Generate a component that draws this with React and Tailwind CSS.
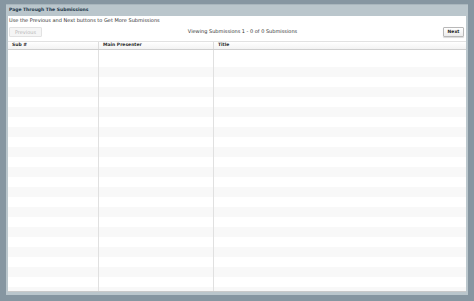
export default function App() {
  const rows = Array.from({ length: 24 });
  return (
    <div className="w-[474px] h-[301px] bg-[#8696a1] pl-[6px] pt-[4px] pr-[6px] pb-[6px] font-['DejaVu_Sans',sans-serif]">
      <div className="h-full flex flex-col bg-[#bac6cc] border-t border-t-[#a9b6bd] px-[2px] pb-[3px]">
        <div className="h-[11px] flex items-center pl-[1px] text-[4.5px] font-bold text-[#22364a] leading-none">
          Page Through The Submissions
        </div>
        <div className="flex-1 bg-white flex flex-col min-h-0 overflow-hidden">
          <div className="h-[8px] pt-[1px] pl-[1px] text-[5px] leading-[7px] text-[#333]">
            Use the Previous and Next buttons to Get More Submissions
          </div>
          <div className="mt-[3px] flex items-center pl-[1px] pr-[2px]">
            <div className="w-[33px] h-[10px] flex items-center justify-center text-[5px] text-[#b5b5b5] bg-[#f5f5f5] border border-[#e2e2e2] rounded-[1px] leading-none">
              Previous
            </div>
            <div className="flex-1 text-center text-[5px] text-[#333] leading-none -mt-[1px]">
              Viewing Submissions 1 - 0 of 0 Submissions
            </div>
            <div className="w-[21px] h-[10px] flex items-center justify-center text-[4.5px] font-bold text-[#222] bg-gradient-to-b from-white to-[#ececec] border border-[#b8b8b8] rounded-[1px] shadow-[0_1px_1px_rgba(0,0,0,0.15)] leading-none">
              Next
            </div>
          </div>
          <div className="mt-[4px] flex-1 min-h-0 flex flex-col border-t border-[#e2e2e2] relative">
            <div className="h-[8px] flex border-b border-[#cfcfcf] bg-gradient-to-b from-white to-[#f3f3f3] text-[4.5px] font-bold text-[#2b2b2b] leading-none">
              <div className="w-[91px] flex items-center pl-[4px] border-r border-[#dcdcdc]">Sub #</div>
              <div className="w-[115px] flex items-center pl-[4px] border-r border-[#dcdcdc]">Main Presenter</div>
              <div className="flex-1 flex items-center pl-[4px]">Title</div>
            </div>
            <div className="flex-1 min-h-0 flex flex-col overflow-hidden border-b border-[#c9c9c9]">
              <div className="h-[7px] flex shrink-0">
                <div className="w-[91px] border-r border-[#e0e0e0]" />
                <div className="w-[115px] border-r border-[#e0e0e0]" />
                <div className="flex-1" />
              </div>
              {rows.map((_, i) => (
                <div
                  key={i}
                  className={
                    i % 2 === 1
                      ? "h-[10px] shrink-0 flex bg-[#f8f8f8]"
                      : "h-[10px] shrink-0 flex bg-white"
                  }
                >
                  <div className="w-[91px] border-r border-[#e0e0e0]" />
                  <div className="w-[115px] border-r border-[#e0e0e0]" />
                  <div className="flex-1" />
                </div>
              ))}
            </div>
          </div>
        </div>
      </div>
    </div>
  );
}
